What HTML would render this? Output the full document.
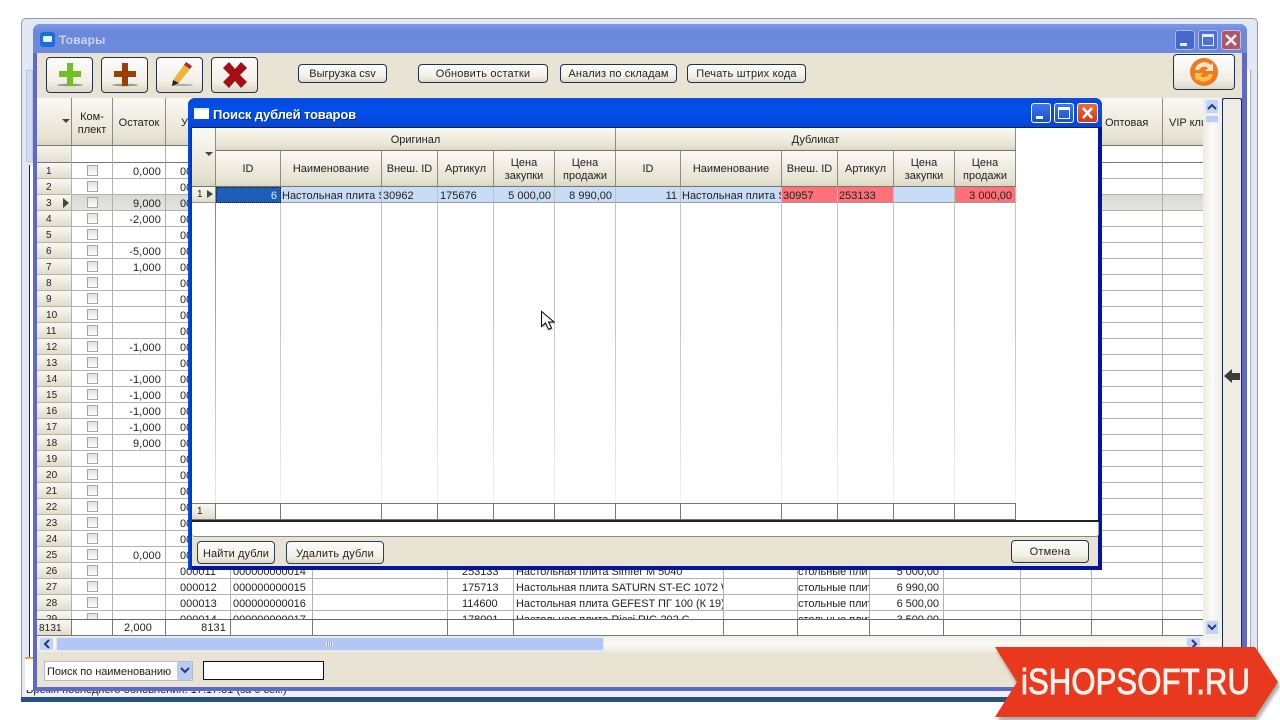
<!DOCTYPE html>
<html><head><meta charset="utf-8"><title>Товары</title>
<style>
html,body{margin:0;padding:0;background:#fff}
body{width:1280px;height:720px;overflow:hidden;position:relative;font:11px "Liberation Sans","DejaVu Sans",sans-serif;color:#222;letter-spacing:.1px}
.a{position:absolute}
.btn{position:absolute;box-sizing:border-box;border:1px solid #1f3350;border-radius:4px;background:linear-gradient(#fdfdfb,#f1efe6 70%,#dcd8c8);text-align:center;white-space:nowrap;letter-spacing:.2px}
.wb{position:absolute;box-sizing:border-box;border:1px solid #fff;border-radius:3px}
.h{position:absolute;box-sizing:border-box;background:linear-gradient(#faf9f4,#e6e2d2 85%,#dad6c4);text-align:center;border-right:1px solid #8c8c88;border-bottom:1px solid #77776f;display:flex;align-items:center;justify-content:center;line-height:13px;padding-top:2px;letter-spacing:0}
.m{padding-top:4px}
.r{position:relative;height:15px;border-bottom:1px solid #b2b2b2;white-space:nowrap;line-height:15px}
.r b{position:absolute;left:0;top:0;width:34px;height:15px;font-weight:normal;background:linear-gradient(#f9f8f2,#e2ddcb);box-sizing:border-box;padding:1px 0 0 9px;font-size:10px}
.r i{position:absolute;left:50px;top:2px;width:11px;height:11px;box-sizing:border-box;border:1px solid #a6a6a2;background:linear-gradient(#e4e4dc,#fdfdfd)}
.r u{position:absolute;left:75px;top:2px;width:49px;text-align:right;text-decoration:none}
.r s{position:absolute;left:143px;top:2px;text-decoration:none;letter-spacing:0}
.r em{position:absolute;top:2px;height:13px;font-style:normal;overflow:hidden;letter-spacing:-.05px}
.v{position:absolute;width:1px;background:#b2b2b2}
.d{position:absolute;box-sizing:border-box;height:16px;line-height:18px;white-space:nowrap;overflow:hidden;border-right:1px solid #c0c0c0;border-bottom:1px solid #9a9a9a;letter-spacing:0}
</style></head><body>

<!-- outer window -->
<div class="a" style="left:21px;top:18px;width:1237px;height:684px;box-sizing:border-box;border:1px solid #8d9aa6;border-bottom:0;border-radius:5px 5px 0 0;background:#e2e8f4"></div>
<div class="a" style="left:26px;top:70px;width:7px;height:92px;background:#cfdcf2;border:1px solid #b9c6dc;box-sizing:border-box"></div>
<div class="a" style="left:29px;top:165px;width:4px;height:492px;background:#fff;border-left:1px solid #222;box-sizing:border-box"></div>
<div class="a" style="left:25px;top:657px;width:8px;height:33px;background:#fff;border-top:2px solid #e4a93a;box-sizing:border-box"></div>
<div class="a" style="left:1247px;top:70px;width:7px;height:630px;background:linear-gradient(90deg,#fff 40%,#9da6b4 40%,#aab2c0 60%,#dfe6f2 60%)"></div>
<div class="a" style="left:22px;top:690px;width:1235px;height:8px;background:#eef0f4;overflow:hidden"><div class="a" style="left:4px;top:-6px;line-height:13px;white-space:nowrap;letter-spacing:0">Время последнего обновления: 17:17:31 (за 0 сек.)</div></div>
<div class="a" style="left:21px;top:697px;width:1237px;height:5px;background:#27517f"></div>

<!-- main window -->
<div class="a" style="left:33px;top:24px;width:1214px;height:667px;background:#6069c8;border-radius:7px 7px 0 0"></div>
<div class="a" style="left:33px;top:24px;width:1214px;height:29px;border-radius:7px 7px 0 0;background:linear-gradient(#7f9ae4,#6c88dc 25%,#6d8ada)"></div>
<div class="a" style="left:40px;top:32px;width:15px;height:15px;border-radius:3px;background:#1c6fd8"><div class="a" style="left:3px;top:4px;width:9px;height:6px;background:#e8f0ff;border-radius:1px"></div></div>
<div class="a" style="left:59px;top:33px;font:bold 12px 'Liberation Sans',sans-serif;color:#c6d6f4;letter-spacing:.2px">Товары</div>
<div class="wb" style="left:1175px;top:30px;width:20px;height:20px;background:#4568cc;border-color:#a9bbe8"><div class="a" style="left:4px;top:12px;width:7px;height:3px;background:#e4ecfa"></div></div>
<div class="wb" style="left:1198px;top:30px;width:20px;height:20px;background:#4f72d2;border-color:#a9bbe8"><div class="a" style="left:3px;top:3px;width:12px;height:12px;box-sizing:border-box;border:1px solid #e4ecfa;border-top-width:3px"></div></div>
<div class="wb" style="left:1221px;top:30px;width:20px;height:20px;background:#a8596e;border-color:#c8c2d8"><svg class="a" style="left:2px;top:2px" width="14" height="14"><path d="M2 2L12 12M12 2L2 12" stroke="#f2e8ee" stroke-width="2.6"/></svg></div>

<!-- toolbar -->
<div class="a" style="left:37px;top:53px;width:1205px;height:45px;background:#e8e3d3"></div>
<div class="btn" style="left:46px;top:57px;width:47px;height:36px"><svg width="45" height="34"><ellipse cx="23" cy="27" rx="13" ry="1.2" fill="#9a9a8a"/><path d="M20 5h6v8h8v6h-8v9h-6v-9h-8v-6h8z" fill="#74bd26"/></svg></div>
<div class="btn" style="left:101px;top:57px;width:47px;height:36px"><svg width="45" height="34"><ellipse cx="23" cy="27" rx="13" ry="1.2" fill="#9a9a8a"/><path d="M20 5h6v8h8v6h-8v9h-6v-9h-8v-6h8z" fill="#994008"/></svg></div>
<div class="btn" style="left:156px;top:57px;width:47px;height:36px"><svg width="45" height="34"><ellipse cx="25" cy="27" rx="11" ry="1" fill="#aaa"/><path d="M27 7l6 4-11 14-6-3z" fill="#efb43c"/><path d="M27 7l2-3 6 4-2 3z" fill="#b02a2a"/><path d="M16 22l6 3-7 3z" fill="#222"/></svg></div>
<div class="btn" style="left:211px;top:57px;width:47px;height:36px"><svg width="45" height="34"><path d="M11 10l6-6 6 7 6-7 6 6-7 7 7 7-6 6-6-7-6 7-6-6 7-7z" fill="#a30f14"/></svg></div>
<div class="btn" style="left:298px;top:64px;width:89px;height:19px;line-height:18px;letter-spacing:0">Выгрузка csv</div>
<div class="btn" style="left:418px;top:64px;width:130px;height:19px;line-height:18px">Обновить остатки</div>
<div class="btn" style="left:560px;top:64px;width:117px;height:19px;line-height:18px;letter-spacing:.1px">Анализ по складам</div>
<div class="btn" style="left:687px;top:64px;width:119px;height:19px;line-height:18px">Печать штрих кода</div>
<div class="btn" style="left:1173px;top:54px;width:62px;height:36px"><svg width="60" height="34"><circle cx="30" cy="17" r="14" fill="#ee7a22"/><path d="M21 15a9.5 9.5 0 0 1 16-5l2-2v8h-8l3-3a6 6 0 0 0-9 2z" fill="#fbe6c8"/><path d="M39 19a9.5 9.5 0 0 1-16 5l-2 2v-8h8l-3 3a6 6 0 0 0 9-2z" fill="#f8c24a"/></svg></div>

<!-- main grid -->
<div class="a" style="left:37px;top:98px;width:1166px;height:521px;background:#fff"></div>
<div class="h m" style="left:37px;top:98px;width:35px;height:48px"><div class="a" style="left:25px;top:21px;width:0;height:0;border:4px solid transparent;border-top:4px solid #444"></div></div>
<div class="h m" style="left:72px;top:98px;width:41px;height:48px">Ком-<br>плект</div>
<div class="h m" style="left:113px;top:98px;width:53px;height:48px">Остаток</div>
<div class="h m" style="left:166px;top:98px;width:65px;height:48px;justify-content:flex-start;padding-left:15px">У</div>
<div class="h m" style="left:1092px;top:98px;width:71px;height:48px;justify-content:flex-start;padding-left:13px">Оптовая</div>
<div class="h m" style="left:1163px;top:98px;width:40px;height:48px;justify-content:flex-start;padding-left:6px;border-right:0;overflow:hidden;white-space:nowrap">VIP кли</div>
<div class="a" style="left:37px;top:146px;width:35px;height:16px;background:linear-gradient(#f6f5ee,#e4e0d0)"></div>
<div class="a" style="left:37px;top:162px;width:1166px;height:1px;background:#777"></div>

<div class="a" style="left:37px;top:163px;width:1166px;height:456px;overflow:hidden">
<div class="r"><b>1</b><i></i><u>0,000</u><s>00</s></div>
<div class="r"><b>2</b><i></i><s>00</s></div>
<div class="r" style="background:linear-gradient(#d8d8d4,#e4e4e0)"><b>3<span class="a" style="left:26px;top:3px;width:0;height:0;border:5px solid transparent;border-left:6px solid #444"></span></b><i></i><u>9,000</u><s>00</s></div>
<div class="r"><b>4</b><i></i><u>-2,000</u><s>00</s></div>
<div class="r"><b>5</b><i></i><s>00</s></div>
<div class="r"><b>6</b><i></i><u>-5,000</u><s>00</s></div>
<div class="r"><b>7</b><i></i><u>1,000</u><s>00</s></div>
<div class="r"><b>8</b><i></i><s>00</s></div>
<div class="r"><b>9</b><i></i><s>00</s></div>
<div class="r"><b>10</b><i></i><s>00</s></div>
<div class="r"><b>11</b><i></i><s>00</s></div>
<div class="r"><b>12</b><i></i><u>-1,000</u><s>00</s></div>
<div class="r"><b>13</b><i></i><s>00</s></div>
<div class="r"><b>14</b><i></i><u>-1,000</u><s>00</s></div>
<div class="r"><b>15</b><i></i><u>-1,000</u><s>00</s></div>
<div class="r"><b>16</b><i></i><u>-1,000</u><s>00</s></div>
<div class="r"><b>17</b><i></i><u>-1,000</u><s>00</s></div>
<div class="r"><b>18</b><i></i><u>9,000</u><s>00</s></div>
<div class="r"><b>19</b><i></i><s>00</s></div>
<div class="r"><b>20</b><i></i><s>00</s></div>
<div class="r"><b>21</b><i></i><s>00</s></div>
<div class="r"><b>22</b><i></i><s>00</s></div>
<div class="r"><b>23</b><i></i><s>00</s></div>
<div class="r"><b>24</b><i></i><s>00</s></div>
<div class="r"><b>25</b><i></i><u>0,000</u><s>00</s></div>
<div class="r"><b>26</b><i></i><s>000011</s><em style="left:196px">000000000014</em><em style="left:425px">253133</em><em style="left:479px;width:208px">Настольная плита Simfer M 5040</em><em style="left:761px;width:71px">стольные плит</em><em style="left:830px;width:72px;text-align:right">5 000,00</em></div>
<div class="r"><b>27</b><i></i><s>000012</s><em style="left:196px">000000000015</em><em style="left:425px">175713</em><em style="left:479px;width:208px">Настольная плита SATURN ST-EC 1072 W</em><em style="left:761px;width:71px">стольные плит</em><em style="left:830px;width:72px;text-align:right">6 990,00</em></div>
<div class="r"><b>28</b><i></i><s>000013</s><em style="left:196px">000000000016</em><em style="left:425px">114600</em><em style="left:479px;width:208px">Настольная плита GEFEST ПГ 100 (К 19)</em><em style="left:761px;width:71px">стольные плит</em><em style="left:830px;width:72px;text-align:right">6 500,00</em></div>
<div class="r"><b>29</b><i></i><s>000014</s><em style="left:196px">000000000017</em><em style="left:425px">178001</em><em style="left:479px;width:208px">Настольная плита Ricci RIC-202 C</em><em style="left:761px;width:71px">стольные плит</em><em style="left:830px;width:72px;text-align:right">3 500,00</em></div>
</div>
<!-- vertical lines -->
<div class="v" style="left:71px;top:146px;height:473px"></div>
<div class="v" style="left:112px;top:146px;height:473px"></div>
<div class="v" style="left:165px;top:146px;height:473px"></div>
<div class="v" style="left:230px;top:570px;height:49px"></div>
<div class="v" style="left:312px;top:570px;height:49px"></div>
<div class="v" style="left:447px;top:570px;height:49px"></div>
<div class="v" style="left:513px;top:570px;height:49px"></div>
<div class="v" style="left:723px;top:570px;height:49px"></div>
<div class="v" style="left:797px;top:570px;height:49px"></div>
<div class="v" style="left:869px;top:570px;height:49px"></div>
<div class="v" style="left:943px;top:570px;height:49px"></div>
<div class="v" style="left:1020px;top:570px;height:49px"></div>
<div class="v" style="left:1091px;top:146px;height:473px"></div>
<div class="v" style="left:1162px;top:146px;height:473px"></div>

<!-- summary row -->
<div class="a" style="left:37px;top:619px;width:1166px;height:17px;box-sizing:border-box;background:#fff;border-top:1px solid #666;border-bottom:1px solid #777"></div>
<div class="a" style="left:37px;top:620px;width:34px;height:15px;background:linear-gradient(#f9f8f2,#e2ddcb);font-size:10px;line-height:17px;padding-left:2px;box-sizing:border-box;overflow:hidden">8131</div>
<div class="a" style="left:124px;top:622px;line-height:13px">2,000</div>
<div class="a" style="left:166px;top:622px;width:60px;text-align:right;line-height:13px">8131</div>
<div class="v" style="left:71px;top:620px;height:15px;background:#777"></div>
<div class="v" style="left:112px;top:620px;height:15px;background:#777"></div>
<div class="v" style="left:165px;top:620px;height:15px;background:#777"></div>
<div class="v" style="left:230px;top:620px;height:15px;background:#777"></div>
<div class="v" style="left:312px;top:620px;height:15px;background:#777"></div>
<div class="v" style="left:447px;top:620px;height:15px;background:#777"></div>
<div class="v" style="left:513px;top:620px;height:15px;background:#777"></div>
<div class="v" style="left:723px;top:620px;height:15px;background:#777"></div>
<div class="v" style="left:797px;top:620px;height:15px;background:#777"></div>
<div class="v" style="left:869px;top:620px;height:15px;background:#777"></div>
<div class="v" style="left:943px;top:620px;height:15px;background:#777"></div>
<div class="v" style="left:1020px;top:620px;height:15px;background:#777"></div>
<div class="v" style="left:1091px;top:620px;height:15px;background:#777"></div>
<div class="v" style="left:1162px;top:620px;height:15px;background:#777"></div>

<!-- v scrollbar -->
<div class="a" style="left:1203px;top:98px;width:19px;height:539px;background:linear-gradient(90deg,#eeece0,#fbfbf8 50%,#ecebe0)"></div>
<div class="a" style="left:1205px;top:99px;width:14px;height:15px;border-radius:2px;background:#c4d4f4;border:1px solid #e8eefa;box-sizing:border-box"><svg class="a" style="left:1px;top:2px" width="10" height="9"><path d="M1 7l4-4 4 4" fill="none" stroke="#263c70" stroke-width="2"/></svg></div>
<div class="a" style="left:1205px;top:115px;width:14px;height:8px;border-radius:2px;background:#bccdf2;border:1px solid #e8eefa;box-sizing:border-box"></div>
<div class="a" style="left:1205px;top:620px;width:14px;height:15px;border-radius:2px;background:#c4d4f4;border:1px solid #e8eefa;box-sizing:border-box"><svg class="a" style="left:1px;top:2px" width="10" height="9"><path d="M1 2l4 4 4-4" fill="none" stroke="#263c70" stroke-width="2"/></svg></div>
<!-- right panel -->
<div class="a" style="left:1222px;top:98px;width:20px;height:590px;box-sizing:border-box;border:1px solid #1c2c58;border-radius:3px 3px 0 0;background:#efede3"></div>
<svg class="a" style="left:1224px;top:368px" width="17" height="16"><path d="M0 8l8-7v4h8v7H8v3z" fill="#3c3c3c"/></svg>

<!-- h scrollbar -->
<div class="a" style="left:37px;top:636px;width:1185px;height:16px;background:linear-gradient(#f0efe6,#fafaf7 50%,#ecebdf)"></div>
<div class="a" style="left:39px;top:637px;width:15px;height:14px;border-radius:2px;background:#c4d4f4;border:1px solid #e8eefa;box-sizing:border-box"><svg class="a" style="left:2px;top:1px" width="9" height="10"><path d="M7 1L3 5l4 4" fill="none" stroke="#263c70" stroke-width="2"/></svg></div>
<div class="a" style="left:56px;top:637px;width:548px;height:14px;border-radius:2px;background:#b2c7f4;border:1px solid #dfe8fa;box-sizing:border-box"></div>
<div class="a" style="left:326px;top:642px;width:7px;height:5px;background:repeating-linear-gradient(90deg,#e8eefc 0 1px,#8ca4d8 1px 2px)"></div>
<div class="a" style="left:1186px;top:637px;width:15px;height:14px;border-radius:2px;background:#c4d4f4;border:1px solid #e8eefa;box-sizing:border-box"><svg class="a" style="left:3px;top:1px" width="9" height="10"><path d="M2 1l4 4-4 4" fill="none" stroke="#263c70" stroke-width="2"/></svg></div>

<!-- bottom of main -->
<div class="a" style="left:37px;top:652px;width:1205px;height:35px;background:#e8e3d3"></div>
<div class="a" style="left:44px;top:661px;width:149px;height:20px;box-sizing:border-box;background:#fff;border:1px solid #b4bccc;line-height:20px;padding-left:2px;white-space:nowrap;overflow:hidden;letter-spacing:-.05px">Поиск по наименованию</div>
<div class="a" style="left:177px;top:662px;width:15px;height:18px;background:#b8cbf2;border-radius:2px"><svg class="a" style="left:3px;top:5px" width="10" height="8"><path d="M1 1l4 4 4-4" fill="none" stroke="#263c70" stroke-width="2"/></svg></div>
<div class="a" style="left:203px;top:661px;width:121px;height:19px;box-sizing:border-box;background:#fff;border:1px solid #111"></div>

<!-- dialog -->
<div class="a" style="left:188px;top:98px;width:914px;height:472px;background:#00149c;border-radius:7px 7px 0 0"></div>
<div class="a" style="left:188px;top:98px;width:914px;height:29px;border-radius:7px 7px 0 0;background:linear-gradient(#0a50d8,#0548e0 12%,#0050ec 40%,#0246d8)"></div>
<div class="a" style="left:188px;top:127px;width:4px;height:443px;background:linear-gradient(90deg,#0a50e0,#0030c0)"></div>
<div class="a" style="left:192px;top:127px;width:906px;height:393px;background:#fff;border-top:1px solid #10204a;box-sizing:border-box"></div>
<div class="a" style="left:194px;top:108px;width:15px;height:11px;background:#fff;border-top:2px solid #dfe8fa;box-sizing:border-box"></div>
<div class="a" style="left:213px;top:107px;font:bold 13px 'Liberation Sans',sans-serif;color:#fff;letter-spacing:-.15px;white-space:nowrap;text-shadow:1px 1px 0 #0a2a90">Поиск дублей товаров</div>
<div class="wb" style="left:1031px;top:103px;width:20px;height:20px;background:linear-gradient(#3b78ec,#1c50c8)"><div class="a" style="left:4px;top:12px;width:7px;height:3px;background:#fff"></div></div>
<div class="wb" style="left:1054px;top:103px;width:20px;height:20px;background:linear-gradient(#3b78ec,#1c50c8)"><div class="a" style="left:3px;top:3px;width:12px;height:12px;box-sizing:border-box;border:1px solid #fff;border-top-width:3px"></div></div>
<div class="wb" style="left:1077px;top:103px;width:21px;height:20px;background:linear-gradient(#ee6a3a,#c83c1c)"><svg class="a" style="left:2px;top:2px" width="15" height="14"><path d="M3 2L12 12M12 2L3 12" stroke="#fff" stroke-width="2.6"/></svg></div>

<!-- dialog grid -->
<div class="h" style="left:192px;top:128px;width:24px;height:59px"><div class="a" style="left:13px;top:24px;width:0;height:0;border:4px solid transparent;border-top:4px solid #444"></div></div>
<div class="h" style="left:216px;top:128px;width:400px;height:23px">Оригинал</div>
<div class="h" style="left:616px;top:128px;width:400px;height:23px">Дубликат</div>
<div class="h" style="left:216px;top:151px;width:65px;height:36px">ID</div>
<div class="h" style="left:281px;top:151px;width:101px;height:36px">Наименование</div>
<div class="h" style="left:382px;top:151px;width:56px;height:36px">Внеш. ID</div>
<div class="h" style="left:438px;top:151px;width:56px;height:36px">Артикул</div>
<div class="h" style="left:494px;top:151px;width:61px;height:36px">Цена<br>закупки</div>
<div class="h" style="left:555px;top:151px;width:61px;height:36px">Цена<br>продажи</div>
<div class="h" style="left:616px;top:151px;width:65px;height:36px">ID</div>
<div class="h" style="left:681px;top:151px;width:101px;height:36px">Наименование</div>
<div class="h" style="left:782px;top:151px;width:56px;height:36px">Внеш. ID</div>
<div class="h" style="left:838px;top:151px;width:56px;height:36px">Артикул</div>
<div class="h" style="left:894px;top:151px;width:61px;height:36px">Цена<br>закупки</div>
<div class="h" style="left:955px;top:151px;width:61px;height:36px">Цена<br>продажи</div>

<div class="a" style="left:192px;top:187px;width:24px;height:16px;box-sizing:border-box;background:linear-gradient(#f9f8f2,#e2ddcb);border-bottom:1px solid #999;border-right:1px solid #888;font-size:10px;line-height:16px;padding-left:5px">1<span class="a" style="left:15px;top:3px;width:0;height:0;border:4px solid transparent;border-left:6px solid #444"></span></div>
<div class="d" style="left:216px;top:187px;width:65px;background:#1d5fb6;color:#dfeafa;text-align:right;padding-right:3px;border:1px dotted #0a1a40;line-height:16px">6</div>
<div class="d" style="left:281px;top:187px;width:101px;background:#c9dcf6;padding-left:1px">Настольная плита Simfer</div>
<div class="d" style="left:382px;top:187px;width:56px;background:#c9dcf6;padding-left:1px">30962</div>
<div class="d" style="left:438px;top:187px;width:56px;background:#c9dcf6;padding-left:2px">175676</div>
<div class="d" style="left:494px;top:187px;width:61px;background:#c9dcf6;text-align:right;padding-right:3px">5 000,00</div>
<div class="d" style="left:555px;top:187px;width:61px;background:#c9dcf6;text-align:right;padding-right:3px">8 990,00</div>
<div class="d" style="left:616px;top:187px;width:65px;background:#c9dcf6;text-align:right;padding-right:3px">11</div>
<div class="d" style="left:681px;top:187px;width:101px;background:#c9dcf6;padding-left:1px">Настольная плита Simfer</div>
<div class="d" style="left:782px;top:187px;width:56px;background:#ff7078;padding-left:1px">30957</div>
<div class="d" style="left:838px;top:187px;width:56px;background:#ff7078;padding-left:1px">253133</div>
<div class="d" style="left:894px;top:187px;width:61px;background:#c9dcf6"></div>
<div class="d" style="left:955px;top:187px;width:61px;background:#ff7078;text-align:right;padding-right:3px">3 000,00</div>
<!-- dialog vertical lines -->
<div class="v" style="left:215px;top:203px;height:301px;background:linear-gradient(#888,#aaa 40%,#e8e8e8)"></div>
<div class="v" style="left:280px;top:203px;height:301px;background:linear-gradient(#c4c4c4,#c4c4c4 40%,#f0f0f0)"></div>
<div class="v" style="left:381px;top:203px;height:301px;background:linear-gradient(#c4c4c4,#c4c4c4 40%,#f0f0f0)"></div>
<div class="v" style="left:437px;top:203px;height:301px;background:linear-gradient(#c4c4c4,#c4c4c4 40%,#f0f0f0)"></div>
<div class="v" style="left:493px;top:203px;height:301px;background:linear-gradient(#c4c4c4,#c4c4c4 40%,#f0f0f0)"></div>
<div class="v" style="left:554px;top:203px;height:301px;background:linear-gradient(#c4c4c4,#c4c4c4 40%,#f0f0f0)"></div>
<div class="v" style="left:615px;top:203px;height:301px;background:linear-gradient(#c4c4c4,#c4c4c4 40%,#f0f0f0)"></div>
<div class="v" style="left:680px;top:203px;height:301px;background:linear-gradient(#c4c4c4,#c4c4c4 40%,#f0f0f0)"></div>
<div class="v" style="left:781px;top:203px;height:301px;background:linear-gradient(#c4c4c4,#c4c4c4 40%,#f0f0f0)"></div>
<div class="v" style="left:837px;top:203px;height:301px;background:linear-gradient(#c4c4c4,#c4c4c4 40%,#f0f0f0)"></div>
<div class="v" style="left:893px;top:203px;height:301px;background:linear-gradient(#c4c4c4,#c4c4c4 40%,#f0f0f0)"></div>
<div class="v" style="left:954px;top:203px;height:301px;background:linear-gradient(#c4c4c4,#c4c4c4 40%,#f0f0f0)"></div>
<div class="v" style="left:1015px;top:203px;height:301px;background:linear-gradient(#c4c4c4,#c4c4c4 40%,#f0f0f0)"></div>
<!-- dialog footer row -->
<div class="a" style="left:192px;top:503px;width:824px;height:17px;box-sizing:border-box;border-top:1px solid #777;border-bottom:1px solid #777"></div>
<div class="a" style="left:192px;top:504px;width:23px;height:15px;background:linear-gradient(#f9f8f2,#e2ddcb);font-size:10px;line-height:16px;padding-left:5px;box-sizing:border-box;overflow:hidden">1</div>
<div class="v" style="left:215px;top:504px;height:15px;background:#777"></div>
<div class="v" style="left:280px;top:504px;height:15px;background:#777"></div>
<div class="v" style="left:381px;top:504px;height:15px;background:#777"></div>
<div class="v" style="left:437px;top:504px;height:15px;background:#777"></div>
<div class="v" style="left:493px;top:504px;height:15px;background:#777"></div>
<div class="v" style="left:554px;top:504px;height:15px;background:#777"></div>
<div class="v" style="left:615px;top:504px;height:15px;background:#777"></div>
<div class="v" style="left:680px;top:504px;height:15px;background:#777"></div>
<div class="v" style="left:781px;top:504px;height:15px;background:#777"></div>
<div class="v" style="left:837px;top:504px;height:15px;background:#777"></div>
<div class="v" style="left:893px;top:504px;height:15px;background:#777"></div>
<div class="v" style="left:954px;top:504px;height:15px;background:#777"></div>
<div class="v" style="left:1015px;top:504px;height:16px;background:#777"></div>
<!-- dialog bottom -->
<div class="a" style="left:192px;top:520px;width:906px;height:46px;background:#e8e3d3;border-top:2px solid #222;box-sizing:border-box"></div>
<div class="a" style="left:192px;top:522px;width:907px;height:15px;background:#fff;border-bottom:1px solid #888;border-right:1px solid #999;box-sizing:border-box;border-radius:0 0 3px 3px"></div>
<div class="btn" style="left:197px;top:541px;width:78px;height:23px;line-height:24px;border-color:#2a3f5e;letter-spacing:.1px">Найти дубли</div>
<div class="btn" style="left:286px;top:541px;width:98px;height:23px;line-height:24px;border-color:#2a3f5e">Удалить дубли</div>
<div class="btn" style="left:1011px;top:540px;width:78px;height:23px;line-height:22px">Отмена</div>

<!-- cursor -->
<svg class="a" style="left:539px;top:309px" width="20" height="26"><path d="M4 4v15l4-3.500 3 6.500 3-1.500-3-6h5.500z" fill="#888" opacity=".45"/><path d="M2.500 2.500v15l4-3.500 3 6.500 3-1.500-3-6h5.500z" fill="#fff" stroke="#000"/></svg>

<!-- watermark -->
<svg class="a" style="left:985px;top:640px" width="295" height="80">
<defs><filter id="b" x="-5%" y="-10%" width="110%" height="125%"><feGaussianBlur stdDeviation="1.5"/></filter></defs>
<polygon points="12,11 272,11 295,46 272,81 12,81 33,46" fill="#666" opacity=".55" filter="url(#b)"/>
<polygon points="10,7 270,7 293,42 270,77 10,77 32,42" fill="#e8391f"/>
<text x="36" y="54" textLength="229" lengthAdjust="spacingAndGlyphs" font-family="Liberation Sans" font-size="36" fill="#fdf3ec" stroke="#fdf3ec" stroke-width=".9">iSHOPSOFT.RU</text>
</svg>

</body></html>
